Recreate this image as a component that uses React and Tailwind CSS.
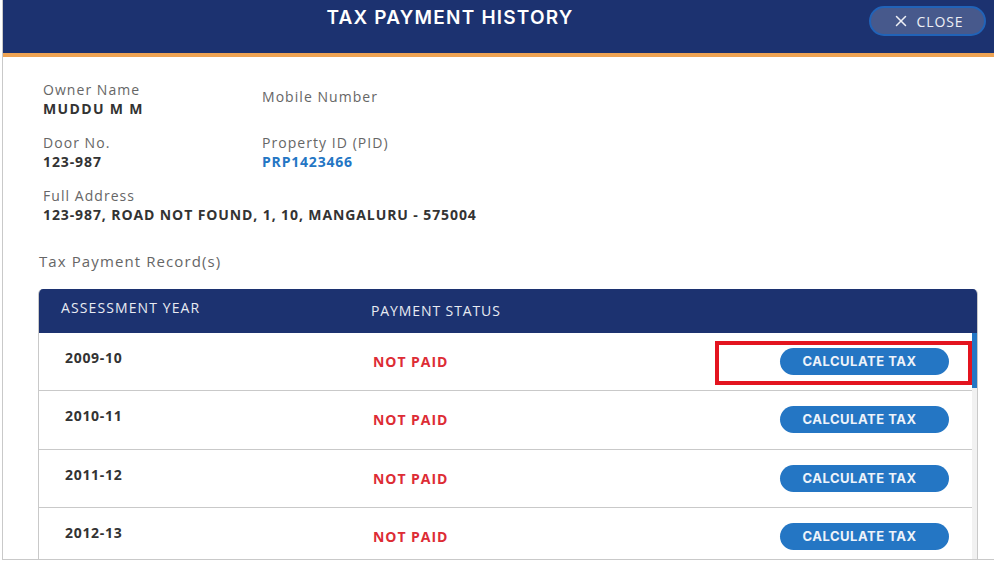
import { X } from "lucide-react";

const years = ["2009-10", "2010-11", "2011-12", "2012-13"];

function Field({ label, value, valueClass = "text-[#333] tracking-[0.9px]", className = "" }) {
  return (
    <div className={className}>
      <p className="text-[14px] leading-[18px] tracking-[1.05px] text-[#666]">{label}</p>
      {value && <p className={`text-[14px] leading-[19px] font-bold ${valueClass}`}>{value}</p>}
    </div>
  );
}

function Row({ year }) {
  return (
    <div className="flex h-[58.4px] border-b border-[#c9c9c9]">
      <div className="w-[334px] pl-[26px] pt-[15px] text-[14px] leading-[20px] font-bold tracking-[0.7px] text-[#333]">{year}</div>
      <div className="flex-1 pt-[19px] text-[14px] leading-[20px] font-bold tracking-[0.95px] text-[#dd2c35]">NOT PAID</div>
      <div className="pr-[23px] pt-[15px]">
        <button className="block h-[27px] w-[169px] rounded-full bg-[#2476c4] pr-[10px] font-['Inter',sans-serif] text-[13px] font-bold tracking-[0.5px] text-[#eef3fa]">CALCULATE TAX</button>
      </div>
    </div>
  );
}

export default function App() {
  return (
    <div className="h-[561px] w-[994px] overflow-hidden bg-white font-['Open_Sans',sans-serif]">
      <div className="ml-[2px] flex h-[560px] flex-col overflow-hidden border-b border-l border-[#c9c9c9]">
        <header className="relative h-[57px] shrink-0 border-b-[4px] border-[#eea353] bg-[#1c3270]">
          <h1 className="pr-[97px] pt-[7px] text-center font-['Inter',sans-serif] text-[19px] leading-[22px] font-semibold tracking-[1.2px] text-white">TAX PAYMENT HISTORY</h1>
          <button className="absolute top-[6px] right-[8px] flex h-[30px] w-[117px] items-center justify-center gap-[7px] rounded-full border-2 border-[#2163b8] bg-[#47598c] text-[14px] font-medium tracking-[0.9px] text-[#eef0f6]">
            <X size={18} strokeWidth={2} />
            CLOSE
          </button>
        </header>

        <div className="flex-1 pl-[35px] pr-[16px]">
          <section className="pl-[5px] pt-[24px]">
            <div className="flex h-[53px]">
              <Field label="Owner Name" value="MUDDU M M" valueClass="text-[#333] tracking-[1.35px]" className="w-[219px]" />
              <Field label="Mobile Number" className="pt-[7px]" />
            </div>
            <div className="flex h-[53px]">
              <Field label="Door No." value="123-987" className="w-[219px]" />
              <Field label="Property ID (PID)" value="PRP1423466" valueClass="text-[#2476c4] tracking-[0.8px]" />
            </div>
            <Field label="Full Address" value="123-987, ROAD NOT FOUND, 1, 10, MANGALURU - 575004" />
          </section>

          <p className="mt-[28px] ml-[1px] text-[15px] leading-[18px] tracking-[1.1px] text-[#666]">Tax Payment Record(s)</p>

          <div className="relative mt-[19px] overflow-hidden rounded-t-[5px] border-x border-[#c9c9c9]">
            <div className="flex h-[44px] bg-[#1c3270] text-[14px] font-medium text-[#e8ebf2]">
              <div className="w-[332px] pl-[22px] pt-[8px] tracking-[1.1px]">ASSESSMENT YEAR</div>
              <div className="pt-[11px] tracking-[0.9px]">PAYMENT STATUS</div>
            </div>
            <div className="flex">
              <div className="flex-1">
                {years.map((y) => (
                  <Row key={y} year={y} />
                ))}
              </div>
              <div className="w-[5px] bg-[#f1f1f1]">
                <div className="h-[55px] bg-[#2476c4]" />
              </div>
            </div>
            <div className="absolute top-[52px] right-[5px] h-[44px] w-[257px] border-4 border-[#e3141f]" />
          </div>
        </div>
      </div>
    </div>
  );
}
